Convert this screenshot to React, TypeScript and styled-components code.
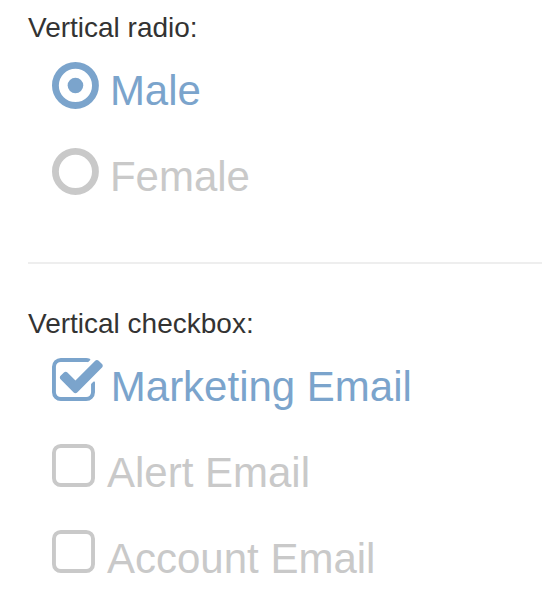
import styled, { createGlobalStyle } from "styled-components"

const Global = createGlobalStyle`
  body {
    margin: 0;
    background: #fff;
    font-family: "Liberation Sans", Arial, sans-serif;
  }
`

const BLUE = "#7ba4cc"
const GREY = "#c9c9c9"

// FA4-style glyph metrics: 1792 units to the em, drawn at ~54.7px
const UNIT = 54.7 / 1792

const Page = styled.main`
  padding: 7px 0 0 28px;
`

const Group = styled.section`
  display: flex;
  flex-direction: column;
`

const Legend = styled.div`
  font-size: 28px;
  line-height: 41px;
  color: #333;
`

const Options = styled.div`
  display: flex;
  flex-direction: column;
  padding-left: 24px;
`

const Option = styled.label<{ $on: boolean }>`
  display: block;
  height: 86px;
  font-size: 42px;
  line-height: 86px;
  color: ${(p) => (p.$on ? BLUE : GREY)};
  white-space: nowrap;
  cursor: pointer;
`

const Glyph = styled.svg<{ $gap: number; $drop: number }>`
  display: inline-block;
  vertical-align: ${(p) => -p.$drop}px;
  margin-right: ${(p) => p.$gap}px;
  fill: currentColor;
`

const Divider = styled.hr`
  margin: 42px 0 39px;
  border: 0;
  height: 2px;
  background: #eee;
`

function RadioIcon({ on }: { on: boolean }) {
  const size = 1536 * UNIT
  return (
    <Glyph width={size} height={size} viewBox="0 0 1536 1536" $gap={11} $drop={128 * UNIT}>
      <circle cx="768" cy="768" r="656" fill="none" stroke="currentColor" strokeWidth="224" />
      {on && <circle cx="768" cy="768" r="256" />}
    </Glyph>
  )
}

function CheckIcon({ on }: { on: boolean }) {
  const w = (on ? 1664 : 1408) * UNIT
  const h = 1408 * UNIT
  return (
    <Glyph width={w} height={h} viewBox={`0 0 ${on ? 1664 : 1408} 1408`} $gap={on ? 8 : 12} $drop={0}>
      <g transform="matrix(1 0 0 -1 0 1408)">
        {on ? (
          <path d="M1408 606v-318q0-119-84.5-203.5t-203.5-84.5h-832q-119 0-203.5 84.5t-84.5 203.5v832q0 119 84.5 203.5t203.5 84.5h832q63 0 117-25q15-7 18-23q3-17-9-29l-49-49q-10-10-23-10q-3 0-9 2q-23 6-45 6h-832q-66 0-113-47t-47-113v-832q0-66 47-113t113-47h832q66 0 113 47t47 113v254q0 13 9 22l64 64q10 10 23 10q6 0 12-3q20-8 20-29zM1639 1095l-814-814q-24-24-57-24t-57 24l-430 430q-24 24-24 57t24 57l110 110q24 24 57 24t57-24l263-263l647 647q24 24 57 24t57-24l110-110q24-24 24-57t-24-57z" />
        ) : (
          <path d="M1120 1280h-832q-66 0-113-47t-47-113v-832q0-66 47-113t113-47h832q66 0 113 47t47 113v832q0 66-47 113t-113 47zM1408 1120v-832q0-119-84.5-203.5t-203.5-84.5h-832q-119 0-203.5 84.5t-84.5 203.5v832q0 119 84.5 203.5t203.5 84.5h832q119 0 203.5-84.5t84.5-203.5z" />
        )}
      </g>
    </Glyph>
  )
}

const genders = [
  { label: "Male", on: true },
  { label: "Female", on: false },
]

const emails = [
  { label: "Marketing Email", on: true },
  { label: "Alert Email", on: false },
  { label: "Account Email", on: false },
]

export default function App() {
  return (
    <Page>
      <Global />
      <Group>
        <Legend>Vertical radio:</Legend>
        <Options>
          {genders.map((g) => (
            <Option key={g.label} $on={g.on}>
              <RadioIcon on={g.on} />
              {g.label}
            </Option>
          ))}
        </Options>
      </Group>
      <Divider />
      <Group>
        <Legend>Vertical checkbox:</Legend>
        <Options>
          {emails.map((e) => (
            <Option key={e.label} $on={e.on}>
              <CheckIcon on={e.on} />
              {e.label}
            </Option>
          ))}
        </Options>
      </Group>
    </Page>
  )
}
